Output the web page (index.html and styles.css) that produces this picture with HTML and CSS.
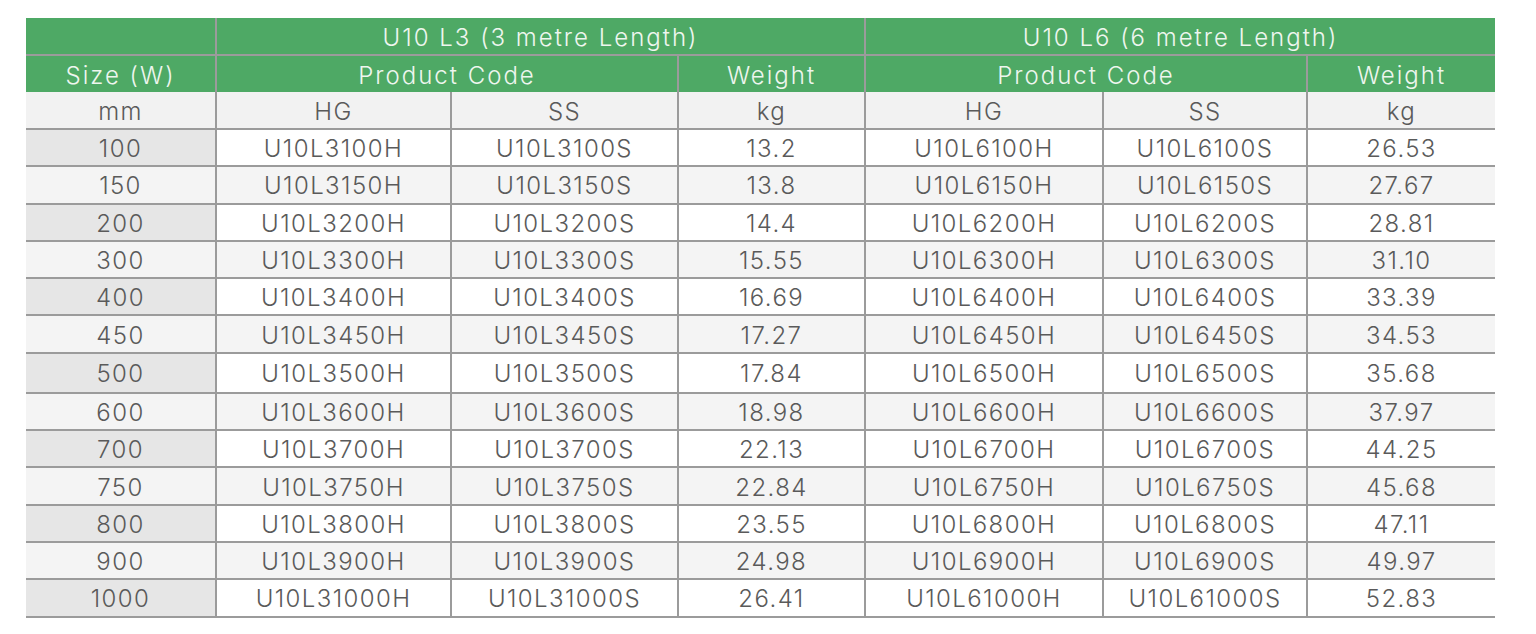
FILE: index.html
```html
<!DOCTYPE html>
<html lang="en">
<head>
<meta charset="utf-8">
<title>U10 Channel Sizes</title>
<link rel="stylesheet" href="styles.css">
</head>
<body>
<table class="spec">
  <colgroup>
    <col class="c-size"><col class="c-hg3"><col class="c-ss3"><col class="c-kg3">
    <col class="c-hg6"><col class="c-ss6"><col class="c-kg6">
  </colgroup>
  <thead>
    <tr class="h1">
      <th class="first"></th>
      <th colspan="3">U10 L3 (3 metre Length)</th>
      <th colspan="3">U10 L6 (6 metre Length)</th>
    </tr>
    <tr class="h2">
      <th class="first">Size (W)</th>
      <th colspan="2">Product Code</th>
      <th>Weight</th>
      <th colspan="2">Product Code</th>
      <th>Weight</th>
    </tr>
    <tr class="h3">
      <th class="first">mm</th>
      <th>HG</th><th>SS</th><th>kg</th>
      <th>HG</th><th>SS</th><th>kg</th>
    </tr>
  </thead>
  <tbody>
    <tr class="odd"><td class="first">100</td><td>U10L3100H</td><td>U10L3100S</td><td>13.2</td><td>U10L6100H</td><td>U10L6100S</td><td>26.53</td></tr>
    <tr class="even"><td class="first">150</td><td>U10L3150H</td><td>U10L3150S</td><td>13.8</td><td>U10L6150H</td><td>U10L6150S</td><td>27.67</td></tr>
    <tr class="odd"><td class="first">200</td><td>U10L3200H</td><td>U10L3200S</td><td>14.4</td><td>U10L6200H</td><td>U10L6200S</td><td>28.81</td></tr>
    <tr class="even"><td class="first">300</td><td>U10L3300H</td><td>U10L3300S</td><td>15.55</td><td>U10L6300H</td><td>U10L6300S</td><td>31.10</td></tr>
    <tr class="odd"><td class="first">400</td><td>U10L3400H</td><td>U10L3400S</td><td>16.69</td><td>U10L6400H</td><td>U10L6400S</td><td>33.39</td></tr>
    <tr class="even"><td class="first">450</td><td>U10L3450H</td><td>U10L3450S</td><td>17.27</td><td>U10L6450H</td><td>U10L6450S</td><td>34.53</td></tr>
    <tr class="odd tall"><td class="first">500</td><td>U10L3500H</td><td>U10L3500S</td><td>17.84</td><td>U10L6500H</td><td>U10L6500S</td><td>35.68</td></tr>
    <tr class="even"><td class="first">600</td><td>U10L3600H</td><td>U10L3600S</td><td>18.98</td><td>U10L6600H</td><td>U10L6600S</td><td>37.97</td></tr>
    <tr class="odd"><td class="first">700</td><td>U10L3700H</td><td>U10L3700S</td><td>22.13</td><td>U10L6700H</td><td>U10L6700S</td><td>44.25</td></tr>
    <tr class="even"><td class="first">750</td><td>U10L3750H</td><td>U10L3750S</td><td>22.84</td><td>U10L6750H</td><td>U10L6750S</td><td>45.68</td></tr>
    <tr class="odd"><td class="first">800</td><td>U10L3800H</td><td>U10L3800S</td><td>23.55</td><td>U10L6800H</td><td>U10L6800S</td><td>47.11</td></tr>
    <tr class="even"><td class="first">900</td><td>U10L3900H</td><td>U10L3900S</td><td>24.98</td><td>U10L6900H</td><td>U10L6900S</td><td>49.97</td></tr>
    <tr class="odd"><td class="first">1000</td><td>U10L31000H</td><td>U10L31000S</td><td>26.41</td><td>U10L61000H</td><td>U10L61000S</td><td>52.83</td></tr>
  </tbody>
</table>
</body>
</html>
```

FILE: styles.css
```css
html, body {
  margin: 0;
  padding: 0;
  background: #ffffff;
}

body {
  padding: 18px 0 0 26px;
  font-family: Inter, "DejaVu Sans", sans-serif;
  font-weight: 300;
  color: #5a5a5a;
}

.spec {
  border-collapse: separate;
  border-spacing: 0;
  table-layout: fixed;
  width: 1469px;
}

.c-size { width: 189px; }
.c-hg3 { width: 235px; }
.c-ss3 { width: 227px; }
.c-kg3 { width: 187px; }
.c-hg6 { width: 238px; }
.c-ss6 { width: 204px; }
.c-kg6 { width: 189px; }

.spec th,
.spec td {
  box-sizing: border-box;
  padding: 3px 0 0 0;
  text-align: center;
  vertical-align: middle;
  font-size: 24px;
  font-weight: 300;
  letter-spacing: 1.4px;
  line-height: 26px;
  border-left: 2px solid #9b9b9b;
  border-bottom: 2px solid #9b9b9b;
  white-space: nowrap;
}

.spec .first {
  border-left: none;
}

.h1 th,
.h2 th {
  letter-spacing: 2px;
}

.h1 th {
  background: #4ea965;
  color: #eef6ef;
  height: 38px;
}

.h2 th {
  background: #4ea965;
  color: #eef6ef;
  height: 36px;
  border-bottom: none;
}

.h3 th {
  background: #f2f2f2;
  height: 38px;
}

.spec tbody td {
  height: 37.3px;
}

.spec tbody tr.tall td {
  height: 40px;
}

.odd td {
  background: #ffffff;
}

.odd td.first {
  background: #e6e6e6;
}

.even td {
  background: #f4f4f4;
}
```
